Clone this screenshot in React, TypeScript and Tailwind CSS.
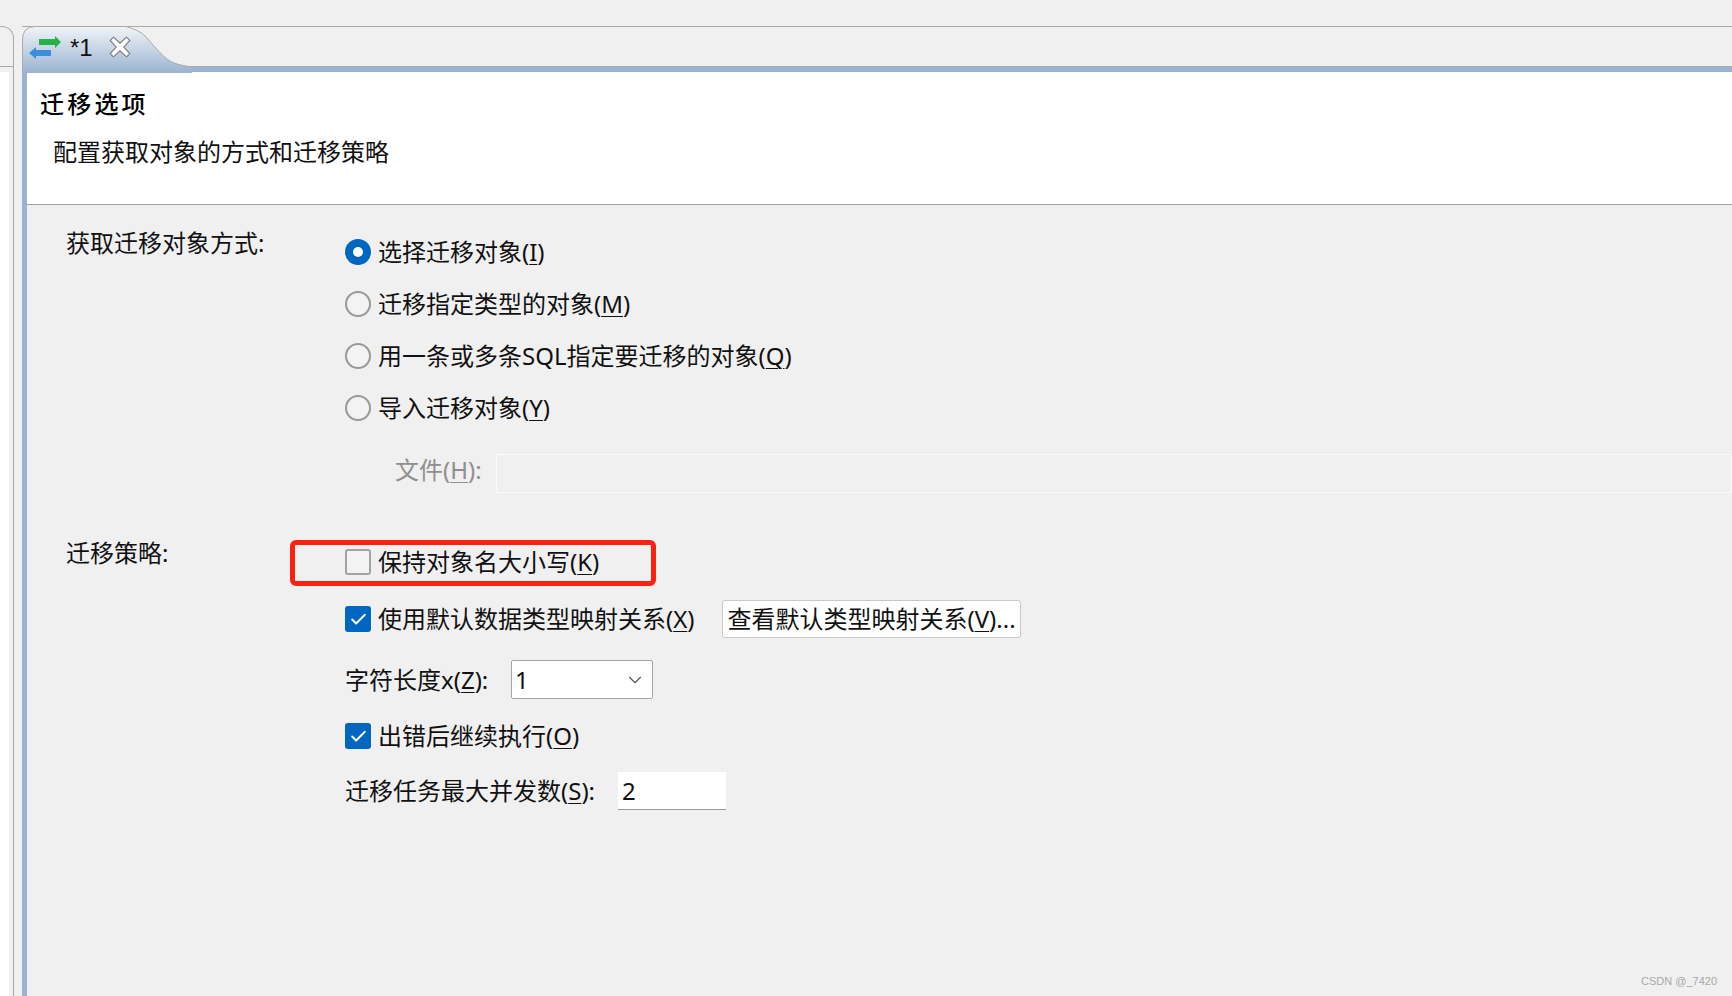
import { Check as CheckIcon, ChevronDown } from "lucide-react";
import type { ReactNode } from "react";

const Key = ({ children }: { children: ReactNode }) => (
  <span className="underline decoration-1 underline-offset-[3px]">{children}</span>
);

const Radio = ({ on, children }: { on?: boolean; children: ReactNode }) => (
  <div className="flex h-[52px] items-center gap-[7px]">
    {on ? (
      <span className="flex h-[26px] w-[26px] items-center justify-center rounded-full bg-[#0067c0]">
        <span className="h-[10px] w-[10px] rounded-full bg-white" />
      </span>
    ) : (
      <span className="h-[26px] w-[26px] rounded-full border-2 border-[#999999] bg-[#f3f3f3]" />
    )}
    <span>{children}</span>
  </div>
);

const Check = ({ on, children }: { on?: boolean; children: ReactNode }) => (
  <div className="flex items-center gap-[7px]">
    {on ? (
      <span className="flex h-[26px] w-[26px] items-center justify-center rounded-[3px] bg-[#0067c0]">
        <CheckIcon size={19} strokeWidth={2.4} className="text-white" />
      </span>
    ) : (
      <span className="h-[26px] w-[26px] rounded-[3px] border-2 border-[#a3a3a3] bg-[#f3f3f3]" />
    )}
    <span>{children}</span>
  </div>
);

function TabStrip() {
  return (
    <div className="relative h-[41px] border-t border-b border-[#a9a9a9]">
      <div className="absolute -top-px -bottom-[6px] left-0 w-[170px]">
        <svg width="170" height="47" viewBox="0 0 170 47" className="block">
          <defs>
            <linearGradient id="tabFill" x1="0" y1="0" x2="0" y2="1">
              <stop offset="0" stopColor="#f1f4f8" />
              <stop offset="1" stopColor="#9ab3d0" />
            </linearGradient>
          </defs>
          <path
            d="M0.5 47 V14 Q0.5 0.5 13 0.5 H104 C112 3 118 5 124 11 C134 22 142 33 152 37 C158 39 163 40 170 41 V47 Z"
            fill="url(#tabFill)"
          />
          <path
            d="M0.5 47 V14 Q0.5 0.5 13 0.5 H104 C112 3 118 5 124 11 C134 22 142 33 152 37 C158 39 163 40 170 41"
            fill="none"
            stroke="#a9a9a9"
          />
        </svg>
        <div className="absolute top-0 left-0 flex h-[40px] items-center">
          <svg width="34" height="26" viewBox="0 0 34 26" className="ml-[7px] mt-[2px]">
            <path d="M10 5 H26 V2 L32 8 L26 14 V11 H10 Z" fill="#27b14a" />
            <path d="M22 16 H7 V13 L0 19 L7 25 V22 H22 Z" fill="#3d8fdc" />
          </svg>
          <span className="ml-[7px] mt-[3px] font-['Liberation_Sans'] text-[24px] leading-none text-[#111111]">*1</span>
          <svg width="24" height="24" viewBox="0 0 22 22" className="ml-[15px] mt-[2px]">
            <path
              d="M5 2 L11 7.5 L17 2 L20 5 L14.5 11 L20 17 L17 20 L11 14.5 L5 20 L2 17 L7.5 11 L2 5 Z"
              fill="#ffffff"
              stroke="#777777"
            />
          </svg>
        </div>
      </div>
    </div>
  );
}

export default function App() {
  return (
    <div className="relative flex h-[996px] w-[1732px] overflow-hidden bg-[#f0f0f0] font-['Noto_Sans','Noto_Sans_CJK_SC',sans-serif] text-[24px] leading-[36px] text-[#111111]">
      {/* left neighbouring view, just a sliver of it */}
      <div className="flex w-[14px] shrink-0 flex-col pt-[26px]">
        <div className="h-[41px] rounded-tr-[12px] border-t border-r border-b border-[#a9a9a9]" />
        <div className="flex flex-1 border-r border-[#a9a9a9]">
          <div className="mt-[5px] w-[9px] bg-white" />
        </div>
      </div>

      <div className="flex min-w-0 flex-1 flex-col pt-[26px] pl-[8px]">
        <TabStrip />
        <div className="flex min-h-0 flex-1 flex-col border-t-[5px] border-l-[5px] border-[#9ab3d0]">
          {/* wizard page header */}
          <div className="h-[133px] border-b border-[#a0a0a0] bg-white pt-[14px] pl-[13px]">
            <div className="font-medium tracking-[3.2px] text-black">迁移选项</div>
            <div className="mt-[12px] pl-[13px]">配置获取对象的方式和迁移策略</div>
          </div>

          {/* how objects are picked */}
          <div className="flex pt-[20px] pl-[39px]">
            <div className="w-[279px] shrink-0">获取迁移对象方式:</div>
            <div className="min-w-0 flex-1 pt-[1px]">
              <Radio on>选择迁移对象(<Key>I</Key>)</Radio>
              <Radio>迁移指定类型的对象(<Key>M</Key>)</Radio>
              <Radio>用一条或多条SQL指定要迁移的对象(<Key>Q</Key>)</Radio>
              <Radio>导入迁移对象(<Key>Y</Key>)</Radio>
              <div className="mt-[20px] flex h-[39px] items-center pl-[50px] text-[#8f8f8f]">
                <span className="-mt-[7px] w-[101px] shrink-0">文件(<Key>H</Key>):</span>
                <div className="h-full flex-1 border border-[#fafafa]" />
              </div>
            </div>
          </div>

          {/* strategy */}
          <div className="mt-[42px] flex pl-[39px]">
            <div className="w-[279px] shrink-0">迁移策略:</div>
            <div className="min-w-0 flex-1 pt-[7px]">
              <div className="relative flex h-[40px] items-center">
                <div className="absolute top-[-2px] -left-[55px] h-[46px] w-[366px] rounded-[6px] border-[5px] border-[#fd2210]" />
                <Check>保持对象名大小写(<Key>K</Key>)</Check>
              </div>
              <div className="mt-[18px] flex h-[38px] items-center">
                <Check on>使用默认数据类型映射关系(<Key>X</Key>)</Check>
                <button className="ml-[28px] h-[38px] rounded-[3px] border border-[#c8c8c8] bg-white px-[4px]">
                  查看默认类型映射关系(<Key>V</Key>)...
                </button>
              </div>
              <div className="mt-[22px] flex h-[39px] items-center">
                <span className="w-[166px] shrink-0">字符长度x(<Key>Z</Key>):</span>
                <div className="flex h-full w-[142px] items-center justify-between rounded-[2px] border border-[#a6a6a6] bg-white pr-[6px] pl-[3px]">
                  <span>1</span>
                  <ChevronDown size={22} strokeWidth={1.2} className="text-[#555555]" />
                </div>
              </div>
              <div className="mt-[17px] flex h-[40px] items-center">
                <Check on>出错后继续执行(<Key>O</Key>)</Check>
              </div>
              <div className="mt-[16px] flex h-[38px] items-center">
                <span className="w-[273px] shrink-0">迁移任务最大并发数(<Key>S</Key>):</span>
                <div className="flex h-full w-[108px] items-center border-b border-[#9a9a9a] bg-white pl-[4px]">2</div>
              </div>
            </div>
          </div>
        </div>
      </div>

      <div className="absolute right-[15px] bottom-[8px] font-['Liberation_Sans'] text-[11px] leading-[14px] text-[#a8a8a8]">
        CSDN @_7420
      </div>
    </div>
  );
}
